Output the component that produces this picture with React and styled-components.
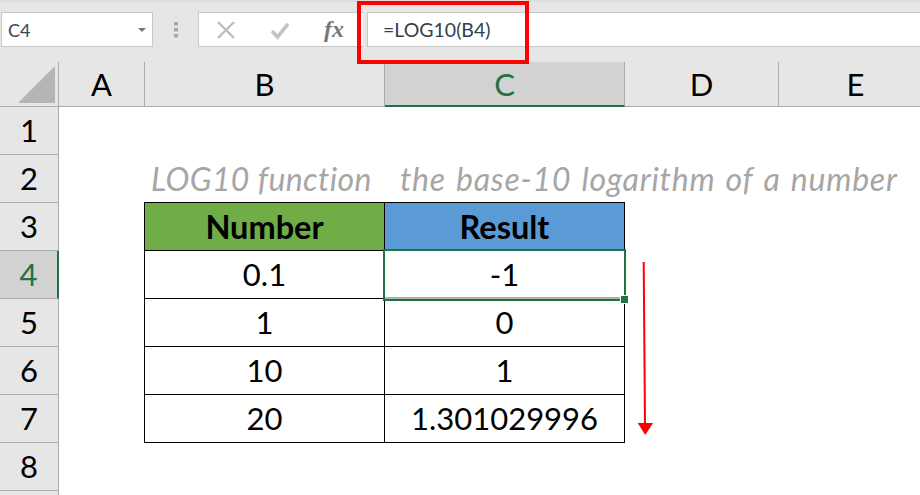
import React from "react";
import styled, { createGlobalStyle } from "styled-components";

const Global = createGlobalStyle`
  html, body { margin: 0; padding: 0; background: #fff; }
  body { width: 920px; height: 495px; overflow: hidden; font-family: Lato, "Open Sans", "Liberation Sans", sans-serif; }
`;
const Page = styled.div`position: relative; width: 920px; height: 495px; overflow: hidden; background: #fff;`;
const FormulaBar = styled.div`
  height: 62px; background: #e6e6e6; display: flex; align-items: flex-start;
  padding: 10px 0 0 1px; box-sizing: border-box; border-top: 2px solid #dedede;
`;
const NameBox = styled.div`
  width: 152px; height: 35px; box-sizing: border-box; background: #fff; border: 1px solid #c8c8c8;
  display: flex; align-items: center; justify-content: space-between; padding: 0 6px 0 6px;
  font-size: 18px; color: #33475b;
`;
const Caret = styled.span`width: 0; height: 0; border-left: 4px solid transparent; border-right: 4px solid transparent; border-top: 4px solid #777;`;
const Grip = styled.div`width: 45px; height: 35px; display: flex; justify-content: center; align-items: center;`;
const Buttons = styled.div`
  width: 165px; height: 35px; box-sizing: border-box; background: #fff; border: 1px solid #c8c8c8; border-right: 0;
  display: flex; align-items: center; padding-left: 17px; gap: 34px; color: #bdbdbd;
`;
const Fx = styled.span`font-family: "Liberation Serif", serif; font-style: italic; font-weight: 700; font-size: 24px; color: #777; margin-left: 0;`;
const FormulaInput = styled.div`
  flex: 1; height: 35px; margin-left: 4px; box-sizing: border-box; background: #fff; border: 1px solid #c8c8c8; border-right: 0;
  display: flex; align-items: center; padding-left: 15px; font-size: 19.5px; color: #333f4f;
`;
const Sheet = styled.div`
  display: grid; grid-template-columns: 59px 86px 240px 240px 154px 154px;
  grid-template-rows: 45px repeat(9, 48px); background: #fff;
`;
const Corner = styled.div`
  background: #e6e6e6; border-right: 1px solid #ababab; border-bottom: 1px solid #ababab; box-sizing: border-box;
  display: flex; align-items: flex-end; justify-content: flex-end; padding: 0 3px 3px 0;
`;
const ColHead = styled.div`
  background: ${p => p.$active ? "#d2d2d2" : "#e6e6e6"};
  border-right: 1px solid #ababab;
  border-bottom: ${p => p.$active ? "2px solid #217346" : "1px solid #ababab"};
  box-sizing: border-box; display: flex; align-items: center; justify-content: center;
  font-size: 31px; color: ${p => p.$active ? "#217346" : "#000"};
`;
const RowHead = styled.div`
  background: ${p => p.$active ? "#d2d2d2" : "#e6e6e6"};
  border-right: ${p => p.$active ? "2px solid #217346" : "1px solid #ababab"};
  border-bottom: 1px solid #ababab;
  box-sizing: border-box; display: flex; align-items: center; justify-content: center; padding-bottom: 2px;
  font-size: 31px; color: ${p => p.$active ? "#217346" : "#000"};
  grid-column: 1; grid-row: ${p => p.$row + 1};
`;
const Title = styled.div`
  grid-column: 2 / -1; grid-row: 3; padding-left: 92px; display: flex; align-items: flex-end; padding-bottom: 5px; gap: 28px;
  font-style: italic; font-size: 32px; letter-spacing: 0.4px; color: #a6a6a6; white-space: nowrap;
`;
const TitleTail = styled.span`letter-spacing: 0.8px; word-spacing: 1.8px;`;
const Cell = styled.div`
  grid-column: ${p => p.$col}; grid-row: ${p => p.$row + 1}; box-sizing: border-box;
  background: ${p => p.$bg || "#fff"};
  border-right: 1px solid #000; border-bottom: 1px solid #000;
  border-left: ${p => p.$first ? "1px solid #000" : "0"};
  border-top: ${p => p.$top ? "1px solid #000" : "0"};
  margin-left: ${p => p.$first ? "-1px" : "0"};
  margin-top: ${p => p.$top ? "-1px" : "0"};
  display: flex; align-items: center; justify-content: center; padding-bottom: ${p => p.$bold ? "0" : "2px"};
  font-size: ${p => p.$bold ? "32.5px" : "31px"}; font-weight: ${p => p.$bold ? 700 : 400}; color: #000;
`;
const Selection = styled.div`
  position: absolute; left: 383px; top: 249px; width: 243px; height: 52px; box-sizing: border-box;
  border: 2px solid #217346; box-shadow: inset 0 -2px 0 #b0b0b0; pointer-events: none;
`;
const Handle = styled.div`
  position: absolute; right: -5px; bottom: -5px; width: 7px; height: 7px; background: #217346; border: 1px solid #fff;
`;
const RedBox = styled.div`
  position: absolute; left: 357px; top: 1px; width: 172px; height: 63px; box-sizing: border-box; border: 4px solid #ff0000;
`;
const Arrow = styled.svg`position: absolute; left: 630px; top: 256px;`;

const Cross = () => (
  <svg width="20" height="20" viewBox="0 0 20 20"><path d="M2 2 L18 18 M18 2 L2 18" stroke="#bdbdbd" strokeWidth="2.4" fill="none"/></svg>
);
const Check = () => (
  <svg width="20" height="20" viewBox="0 0 20 20"><path d="M2 11 L7.5 17 L18 4" stroke="#c4c4c4" strokeWidth="3.6" fill="none"/></svg>
);
const Dots = () => (
  <svg width="4" height="16" viewBox="0 0 4 16" fill="#a8a8a8"><rect width="4" height="3.5"/><rect y="6" width="4" height="3.5"/><rect y="12" width="4" height="3.5"/></svg>
);

const rows = [
  ["0.1", "-1"],
  ["1", "0"],
  ["10", "1"],
  ["20", "1.301029996"],
];

export default function App() {
  return (
    <Page>
      <Global />
      <FormulaBar>
        <NameBox>C4<Caret /></NameBox>
        <Grip><Dots /></Grip>
        <Buttons><Cross /><Check /><Fx>fx</Fx></Buttons>
        <FormulaInput>=LOG10(B4)</FormulaInput>
      </FormulaBar>
      <Sheet>
        <Corner>
          <svg width="37" height="37" viewBox="0 0 37 37"><path d="M37 0 V37 H0 Z" fill="#b5b5b5"/></svg>
        </Corner>
        <ColHead>A</ColHead>
        <ColHead>B</ColHead>
        <ColHead $active>C</ColHead>
        <ColHead>D</ColHead>
        <ColHead>E</ColHead>
        {[1,2,3,4,5,6,7,8,""].map((n, i) => <RowHead key={i} $row={i + 1} $active={n === 4}>{n}</RowHead>)}
        <Title><span>LOG10 function</span><TitleTail>the base-10 logarithm of a number</TitleTail></Title>
        <Cell $col={3} $row={3} $first $top $bold $bg="#70ad47">Number</Cell>
        <Cell $col={4} $row={3} $top $bold $bg="#5b9bd5">Result</Cell>
        {rows.map((r, i) => (
          <React.Fragment key={i}>
            <Cell $col={3} $row={4 + i} $first>{r[0]}</Cell>
            <Cell $col={4} $row={4 + i}>{r[1]}</Cell>
          </React.Fragment>
        ))}
      </Sheet>
      <Selection><Handle /></Selection>
      <RedBox />
      <Arrow width="30" height="184" viewBox="0 0 30 184">
        <path d="M13.7 6 L15 170" stroke="#ff0000" strokeWidth="2" fill="none"/>
        <path d="M7.7 167 H23 L15.3 179 Z" fill="#ff0000"/>
      </Arrow>
    </Page>
  );
}
